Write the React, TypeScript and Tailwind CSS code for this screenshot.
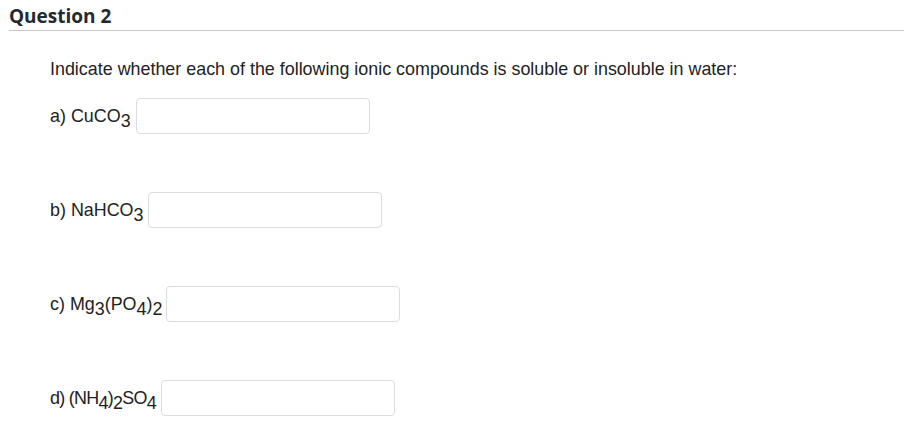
import React from "react";

type Part = string | { sub: string };

const items: { label: string; formula: Part[]; gap: string }[] = [
  { label: "a)", formula: ["CuCO", { sub: "3" }], gap: "mr-[5px]" },
  { label: "b)", formula: ["NaHCO", { sub: "3" }], gap: "mr-[4px]" },
  { label: "c)", formula: ["Mg", { sub: "3" }, "(PO", { sub: "4" }, ")", { sub: "2" }], gap: "mr-[4px]" },
  {
    label: "d)",
    formula: ["(NH", { sub: "4" }, ")", { sub: "2" }, "SO", { sub: "4" }],
    gap: "mr-[5px] tracking-[-0.7px]",
  },
];

function Formula({ parts }: { parts: Part[] }) {
  return (
    <span>
      {parts.map((p, i) =>
        typeof p === "string" ? (
          <span key={i}>{p}</span>
        ) : (
          <span key={i} className="relative top-[5px]">
            {p.sub}
          </span>
        )
      )}
    </span>
  );
}

export default function App() {
  return (
    <div className="w-[904px] h-[431px] bg-white overflow-hidden">
      <div className="pl-[9px] pt-[4px]">
        <h2
          className="text-[19px] font-bold text-[#222a30] leading-[24px] pb-[2px] border-b border-[#c7c7c7]"
          style={{ fontFamily: '"Open Sans", sans-serif' }}
        >
          Question 2
        </h2>
      </div>
      <div
        className="pl-[50px] pt-[28px] text-[17.9px] text-[#222] leading-[20px]"
        style={{ fontFamily: '"Liberation Sans", Arial, sans-serif' }}
      >
        <p>Indicate whether each of the following ionic compounds is soluble or insoluble in water:</p>
        <div className="flex flex-col gap-[58px] mt-[19px]">
          {items.map((it) => (
            <div key={it.label} className="flex items-center h-[36px]">
              <span className={`${it.gap} whitespace-pre`}>
                {it.label} <Formula parts={it.formula} />
              </span>
              <input
                type="text"
                className="w-[234px] h-[36px] border border-[#dcdcdc] rounded-[4px] bg-white"
              />
            </div>
          ))}
        </div>
      </div>
    </div>
  );
}
